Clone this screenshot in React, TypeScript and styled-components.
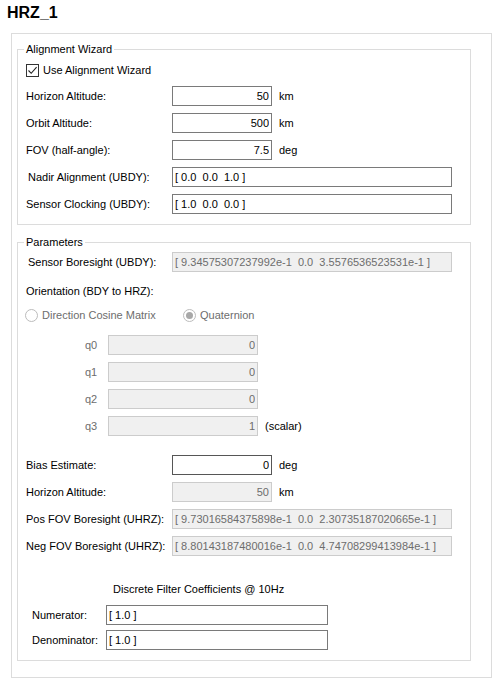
import React from 'react'
import styled, { createGlobalStyle } from 'styled-components'

const GlobalStyle = createGlobalStyle`
  html, body {
    margin: 0;
    padding: 0;
    background: #ffffff;
  }
  body {
    font-family: "Liberation Sans", Arial, sans-serif;
    font-size: 11px;
    color: #000000;
  }
`

const Page = styled.div`
  width: 503px;
  height: 689px;
  padding-top: 3px;
  box-sizing: border-box;
`

const Title = styled.h1`
  margin: 0 0 0 7px;
  height: 20px;
  font-size: 16px;
  line-height: 20px;
  font-weight: bold;
`

const Frame = styled.div`
  margin: 10px 0 0 11px;
  width: 481px;
  box-sizing: border-box;
  border: 1px solid #dcdcdc;
  padding: 15px 0 16px 5px;
`

const Group = styled.div<{ $mt?: number }>`
  position: relative;
  width: 454px;
  box-sizing: border-box;
  margin-top: ${({ $mt }) => $mt ?? 0}px;
  border: 1px solid #dcdcdc;
  padding: 0 0 10px 8px;
  display: flex;
  flex-direction: column;
`

const Legend = styled.span`
  position: absolute;
  top: -8px;
  left: 6px;
  padding: 0 2px;
  background: #ffffff;
  line-height: 14px;
`

const Row = styled.div<{ $mt: number; $h?: number }>`
  display: flex;
  align-items: center;
  height: ${({ $h }) => $h ?? 20}px;
  margin-top: ${({ $mt }) => $mt}px;
`

const Label = styled.span<{ $w?: number; $indent?: number; $muted?: boolean }>`
  flex: none;
  box-sizing: border-box;
  width: ${({ $w }) => ($w ? `${$w}px` : 'auto')};
  padding-left: ${({ $indent }) => $indent ?? 0}px;
  color: ${({ $muted }) => ($muted ? '#6d6d6d' : '#000000')};
  white-space: nowrap;
`

const Unit = styled.span`
  margin-left: 7px;
`

const Field = styled.input<{ $w: number; $right?: boolean; $focus?: boolean }>`
  flex: none;
  box-sizing: border-box;
  width: ${({ $w }) => $w}px;
  height: 20px;
  margin: 0;
  padding: 0 2px;
  border: 1px solid ${({ $focus, disabled }) => (disabled ? '#cccccc' : $focus ? '#565656' : '#7a7a7a')};
  border-radius: 0;
  background: ${({ disabled }) => (disabled ? '#f0f0f0' : '#ffffff')};
  color: ${({ disabled }) => (disabled ? '#6d6d6d' : '#000000')};
  -webkit-text-fill-color: ${({ disabled }) => (disabled ? '#6d6d6d' : '#000000')};
  font-family: inherit;
  font-size: 11px;
  text-align: ${({ $right }) => ($right ? 'right' : 'left')};
  outline: none;
  opacity: 1;
`

const CheckBox = styled.span`
  flex: none;
  width: 13px;
  height: 13px;
  box-sizing: border-box;
  border: 1px solid #333333;
  background: #ffffff;
  display: flex;
  align-items: center;
  justify-content: center;
  margin-right: 4px;
`

const RadioItem = styled.div<{ $w?: number }>`
  display: flex;
  align-items: center;
  width: ${({ $w }) => ($w ? `${$w}px` : 'auto')};
  color: #6d6d6d;
`

const RadioDot = styled.span<{ $on?: boolean }>`
  flex: none;
  width: 13px;
  height: 13px;
  box-sizing: border-box;
  border-radius: 50%;
  border: 1px solid #bcbcbc;
  background: #ffffff;
  margin-right: 4px;
  display: flex;
  align-items: center;
  justify-content: center;

  &::after {
    content: '';
    display: ${({ $on }) => ($on ? 'block' : 'none')};
    width: 7px;
    height: 7px;
    border-radius: 50%;
    background: #a8a8a8;
  }
`

const Check = () => (
  <svg width="11" height="11" viewBox="0 0 11 11">
    <polyline points="1.5,5.5 4.2,8.3 9.6,2.2" fill="none" stroke="#222" strokeWidth="1.1" />
  </svg>
)

type FieldRowProps = {
  label: string
  value: string
  mt: number
  w?: number
  unit?: string
  right?: boolean
  disabled?: boolean
  focus?: boolean
  indent?: number
}

const FieldRow: React.FC<FieldRowProps> = ({ label, value, mt, w = 100, unit, right, disabled, focus, indent }) => (
  <Row $mt={mt}>
    <Label $w={146} $indent={indent}>{label}</Label>
    <Field $w={w} $right={right} $focus={focus} disabled={disabled} readOnly value={value} />
    {unit && <Unit>{unit}</Unit>}
  </Row>
)

const quats = [
  { name: 'q0', value: '0', mt: 10 },
  { name: 'q1', value: '0', mt: 7 },
  { name: 'q2', value: '0', mt: 7 },
  { name: 'q3', value: '1', mt: 7, note: '(scalar)' },
]

const App: React.FC = () => {
  return (
    <Page>
      <GlobalStyle />
      <Title>HRZ_1</Title>
      <Frame>
        <Group>
          <Legend>Alignment Wizard</Legend>
          <Row $mt={13} $h={14}>
            <CheckBox>
              <Check />
            </CheckBox>
            <Label>Use Alignment Wizard</Label>
          </Row>
          <FieldRow label="Horizon Altitude:" value="50" mt={9} right unit="km" />
          <FieldRow label="Orbit Altitude:" value="500" mt={7} right unit="km" />
          <FieldRow label="FOV (half-angle):" value="7.5" mt={7} right unit="deg" />
          <FieldRow label="Nadir Alignment (UBDY):" value="[ 0.0  0.0  1.0 ]" mt={7} w={280} indent={2} />
          <FieldRow label="Sensor Clocking (UBDY):" value="[ 1.0  0.0  0.0 ]" mt={7} w={280} />
        </Group>

        <Group $mt={17}>
          <Legend>Parameters</Legend>
          <FieldRow
            label="Sensor Boresight (UBDY):"
            value="[ 9.34575307237992e-1  0.0  3.5576536523531e-1 ]"
            mt={9}
            w={280}
            indent={2}
            disabled
          />
          <Row $mt={9}>
            <Label>Orientation (BDY to HRZ):</Label>
          </Row>
          <Row $mt={4}>
            <RadioItem $w={158} style={{ marginLeft: -1 }}>
              <RadioDot />
              Direction Cosine Matrix
            </RadioItem>
            <RadioItem>
              <RadioDot $on />
              Quaternion
            </RadioItem>
          </Row>
          {quats.map((q) => (
            <Row key={q.name} $mt={q.mt}>
              <Label $w={82} $indent={59} $muted>
                {q.name}
              </Label>
              <Field $w={150} $right disabled readOnly value={q.value} />
              {q.note && <Unit>{q.note}</Unit>}
            </Row>
          ))}
          <FieldRow label="Bias Estimate:" value="0" mt={19} right focus unit="deg" />
          <FieldRow label="Horizon Altitude:" value="50" mt={7} right disabled unit="km" />
          <FieldRow
            label="Pos FOV Boresight (UHRZ):"
            value="[ 9.73016584375898e-1  0.0  2.30735187020665e-1 ]"
            mt={7}
            w={280}
            disabled
          />
          <FieldRow
            label="Neg FOV Boresight (UHRZ):"
            value="[ 8.80143187480016e-1  0.0  4.74708299413984e-1 ]"
            mt={7}
            w={280}
            disabled
          />
          <Row $mt={23}>
            <Label $indent={87}>Discrete Filter Coefficients @ 10Hz</Label>
          </Row>
          <Row $mt={6}>
            <Label $w={80} $indent={6}>Numerator:</Label>
            <Field $w={222} readOnly value="[ 1.0 ]" />
          </Row>
          <Row $mt={5}>
            <Label $w={80} $indent={6}>Denominator:</Label>
            <Field $w={222} readOnly value="[ 1.0 ]" />
          </Row>
        </Group>
      </Frame>
    </Page>
  )
}

export default App
